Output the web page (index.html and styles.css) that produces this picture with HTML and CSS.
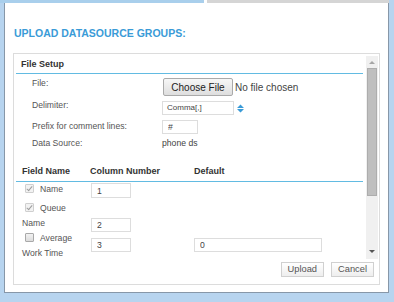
FILE: index.html
```html
<!doctype html>
<html>
<head>
	<meta charset='utf-8'>
	<title>Upload Datasource Groups</title>
	<link rel="stylesheet" href="styles.css">
</head>
<body>
<div class='tabs'><span class='tab tab-on'></span><span class='tab'></span></div>
<div class='dialog'>
	<h1 class='title'>UPLOAD DATASOURCE GROUPS:</h1>
	<div class='box'>
		<div class='scroll'>
			<div class='pane'>
				<h2 class='section'>File Setup</h2>
				<div class='setup'>
					<span class='lbl'>File:</span>
					<div class='val'><input type='file' class='file'></div>
					<span class='lbl'>Delimiter:</span>
					<div class='val val-sel'>
						<span class='select'>Comma[,]</span>
						<svg class='spin' width='7' height='9' viewBox='0 0 7 9'><path d='M0 4 3.5 0.5 7 4Z M0 5 3.5 8.5 7 5Z' fill='#3a9bd7'/></svg>
					</div>
					<span class='lbl'>Prefix for comment lines:</span>
					<div class='val'><input type='text' class='txt prefix' value='#'></div>
					<span class='lbl'>Data Source:</span>
					<span class='val'>phone ds</span>
				</div>

				<div class='cols head'><span>Field Name</span><span>Column Number</span><span>Default</span></div>
				<div class='cols fields'>
					<div class='fname'><span class='cb on'></span>Name</div>
					<div><input type='text' class='txt num' value='1'></div>
					<div></div>

					<div class='fname'><span class='cb on'></span>Queue Name</div>
					<div><input type='text' class='txt num num-b' value='2'></div>
					<div></div>

					<div class='fname'><span class='cb'></span>Average Work Time</div>
					<div><input type='text' class='txt num num-c' value='3'></div>
					<div><input type='text' class='txt def' value='0'></div>
				</div>
			</div>
			<div class='vbar'>
				<span class='arr up'></span>
				<span class='thumb'></span>
				<span class='arr down'></span>
			</div>
		</div>
		<div class='actions'><button class='btn'>Upload</button><button class='btn'>Cancel</button></div>
	</div>
</div>
</body>
</html>
```

FILE: styles.css
```css
*{margin:0;padding:0;box-sizing:border-box;}
body{width:394px;height:302px;overflow:hidden;background:#b7d4ef;font-family:"Liberation Sans",Arial,sans-serif;font-size:8.65px;color:#555;}

.tabs{display:flex;height:3px;margin-right:5px;background:#fff;}
.tab{display:block;flex:1;margin-left:3px;background:#d5d5d5;}
.tab-on{flex:0 0 204px;margin-left:0;background:#a9cfec;}

.dialog{height:290px;margin:0 5px 0 4px;background:#fff;border:1px solid #8797a8;border-top:0;}
.title{padding:24px 0 0 9px;font-size:10.5px;line-height:12px;font-weight:bold;color:#3a9bd7;}

.box{margin:14px 8px 0 8px;border:1px solid #dcdcdc;padding:2px 1px 7px 2px;}
.scroll{display:flex;height:203px;}
.pane{flex:1;margin-right:3px;overflow:hidden;}

.section{font-size:9px;line-height:11px;font-weight:bold;color:#333;padding:3px 0 3px 5px;border-bottom:1px solid #62bbe2;}

.setup{display:grid;grid-template-columns:130px 1fr;grid-template-rows:22px 21px 17px 12px;margin-top:3px;padding-left:16px;line-height:12px;}
.val{color:#444;}
.val-sel{display:flex;align-items:center;height:14px;margin-top:2px;}
.file{display:block;height:18px;margin:1px 0 0 1px;font-family:inherit;font-size:10px;line-height:18px;color:#444;}
.file::file-selector-button{height:18px;width:70px;margin-right:2px;padding:0;border:1px solid #aaa;border-radius:2px;background:linear-gradient(#f7f7f7,#dedede);font-family:inherit;font-size:10px;color:#222;}
.select{display:block;width:72px;height:14px;padding-left:4px;border:1px solid #ddd;font-size:8px;line-height:12px;color:#444;}
.spin{display:block;margin-left:3px;}

.txt{display:block;height:14px;border:1px solid #ddd;background:#fff;padding-left:5px;font-family:inherit;font-size:8.65px;color:#444;outline:none;}
.prefix{width:36px;}

.cols{display:grid;grid-template-columns:68px 104px 1fr;padding-left:6px;}
.head{margin-top:15px;padding-top:1px;padding-bottom:4px;border-bottom:1px solid #62bbe2;font-size:9px;line-height:12px;font-weight:bold;color:#333;}
.fields{grid-template-rows:19px 30px auto;}
.fname{line-height:15px;color:#555;}
.cb{display:inline-block;width:9px;height:9px;margin:0 6px 0 3px;vertical-align:-1px;border:1px solid #a9a9a9;border-radius:1px;background:linear-gradient(#f2f2f2,#dcdcdc);}
.cb.on{border-color:#cfcfcf;background:#f2f2f2;position:relative;}
.cb.on::after{content:"";position:absolute;left:2px;top:0;width:2px;height:5px;border:solid #9c9c9c;border-width:0 1.5px 1.5px 0;transform:rotate(40deg);}
.num{width:40px;height:15px;margin:1px 0 0 1px;}
.num-b{height:14px;margin-top:17px;}
.num-c{height:14px;margin-top:7px;}
.def{width:128px;height:14px;margin-top:7px;}

.vbar{display:flex;flex-direction:column;align-items:center;width:12px;background:#f0f0f0;}
.arr{display:block;width:0;height:0;border-left:3px solid transparent;border-right:3px solid transparent;}
.up{margin:5px 0 4px;border-bottom:3px solid #a6a6a6;}
.thumb{display:block;width:10px;height:128px;background:#bfbfbf;border:1px solid #adadad;}
.down{margin:auto 0 6px;border-top:3px solid #555;}

.actions{display:flex;justify-content:flex-end;gap:7px;margin-top:3px;padding-right:4px;}
.btn{height:15px;padding:0 6px;border:1px solid #d0d0d0;background:linear-gradient(#fff,#eee);font-family:inherit;font-size:9.3px;line-height:13px;color:#555;}
```
